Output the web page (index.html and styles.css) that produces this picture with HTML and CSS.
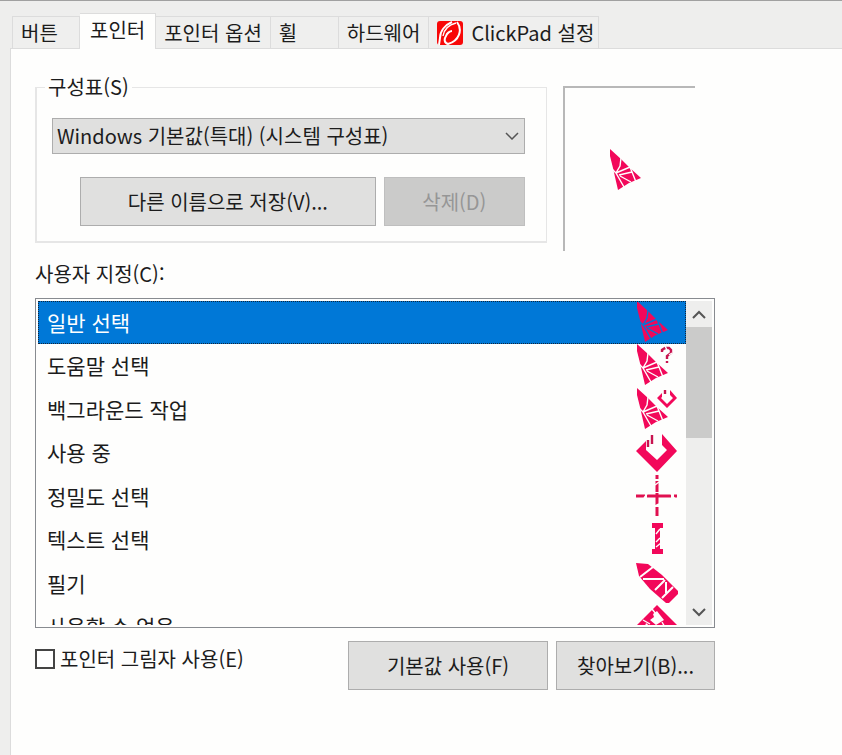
FILE: index.html
```html
<!DOCTYPE html>
<html lang="ko">
<head>
  <meta charset="UTF-8" />
  <meta name="viewport" content="width=device-width, initial-scale=1" />
  <title>마우스 속성</title>
  <link rel="stylesheet" href="styles.css">
</head>
<body>

<!-- shared cursor arrow -->
<svg class="defs" aria-hidden="true">
  <symbol id="arrow" viewBox="0 0 42 42">
    <path class="ink" d="M1 0L12 10L21 19L32 29L20 34L9 41L6 28L4 19L1 7Z"/>
    <path class="crack" d="M12 9L11 17L7 24L15 38M7 24L21 18L27 33M10 26L23 23M11 27L22 33M3 20L8 25"/>
  </symbol>
</svg>

<nav class="tabs" role="tablist">
  <button class="tab" role="tab">버튼</button>
  <button class="tab active" role="tab" aria-selected="true">포인터</button>
  <button class="tab" role="tab">포인터 옵션</button>
  <button class="tab" role="tab">휠</button>
  <button class="tab" role="tab">하드웨어</button>
  <button class="tab with-logo" role="tab">
    <svg class="logo" viewBox="0 0 26 24" aria-hidden="true">
      <rect width="26" height="24" rx="3" fill="#f80808"/>
      <path d="M15 1C8 4 3 10 3 17L2 24M20 1C26 9 22 20 11 23C7 22 7 18 9 15C10 12 13 10 15 10" fill="none" stroke="#fff" stroke-width="2"/>
      <path d="M19 2C11 4 7 9 6 15" fill="none" stroke="#fff" stroke-width="1.4"/>
    </svg>
    ClickPad 설정
  </button>
</nav>

<main class="panel">
  <div class="content">
    <div class="top">
      <fieldset class="scheme">
        <legend>구성표(S)</legend>
        <div class="select-wrap">
          <select aria-label="구성표(S)">
            <option>Windows 기본값(특대) (시스템 구성표)</option>
          </select>
          <svg class="chevron" viewBox="0 0 14 8" aria-hidden="true"><path d="M1 1L7 7L13 1"/></svg>
        </div>
        <div class="scheme-buttons">
          <button class="btn save">다른 이름으로 저장(V)...</button>
          <button class="btn delete" disabled>삭제(D)</button>
        </div>
      </fieldset>
      <div class="preview">
        <svg class="cursor"><use href="#arrow"/></svg>
      </div>
    </div>

    <p class="list-label" id="customLabel">사용자 지정(C):</p>
    <div class="listbox">
      <ul class="items" role="listbox" aria-labelledby="customLabel">
        <li class="selected" role="option" aria-selected="true">일반 선택
          <svg class="cursor"><use href="#arrow"/></svg>
        </li>
        <li role="option">도움말 선택
          <svg class="cursor" viewBox="0 0 42 42">
            <use href="#arrow" width="42" height="42"/>
            <path class="thin" d="M26 8V6L29 4H33L35 6V9L31 12V15M31 17V19"/>
            <path class="crack" d="M29 2L31 6M33 11L36 9"/>
          </svg>
        </li>
        <li role="option">백그라운드 작업
          <svg class="cursor" viewBox="0 0 42 42">
            <use href="#arrow" width="42" height="42"/>
            <path class="ink" d="M21 10L26 5V9L25 10L31 16L37 10L34 7V2L41 10L31 20Z"/>
            <path class="thin" d="M29 2V6"/>
          </svg>
        </li>
        <li role="option">사용 중
          <svg class="cursor" viewBox="0 0 42 42">
            <path class="ink" d="M0 20L10 10V19L21 29L31 19L26 14V3L41 20L21 41Z"/>
            <path class="thin" d="M12 9V16M16 4V13"/>
          </svg>
        </li>
        <li role="option">정밀도 선택
          <svg class="cursor" viewBox="0 0 42 42">
            <path class="line" d="M21 0V4M21 6V17M21 18V30M21 32V41M0 21H9M11 21H35M38 21H41"/>
            <path class="crack" d="M8 23L11 19M19 10L23 7M35 19L39 24M19 31L23 29"/>
          </svg>
        </li>
        <li role="option">텍스트 선택
          <svg class="cursor" viewBox="0 0 42 42">
            <path class="ink" d="M16 5H27V10H24V31H27V36H16V31H19V10H16Z"/>
            <path class="crack" d="M24 11L20 16M24 20L20 24M20 29L25 25"/>
          </svg>
        </li>
        <li role="option">필기
          <svg class="cursor" viewBox="0 0 42 42">
            <path class="ink" d="M0 1L12 2L26 13L42 29V32L33 41H30L14 27L3 14Z"/>
            <path class="crack wide" d="M4 15L17 5M7 17H28M19 28L29 18M26 36L37 25M30 20V31"/>
          </svg>
        </li>
        <li role="option">사용할 수 없음
          <svg class="cursor" viewBox="0 0 42 42">
            <path class="ink" fill-rule="evenodd" d="M21 0L41 20L21 41L1 20ZM21 6L17 9L18 12L14 15L20 20L28 15L24 10ZM10 18L9 21L21 33L24 30Z"/>
            <path class="crack" d="M16 4L20 9M7 15L14 19M26 17L30 24"/>
          </svg>
        </li>
      </ul>
      <div class="scrollbar">
        <button class="arrow-btn" aria-label="위로"><svg viewBox="0 0 14 9"><path d="M1 8L7 2L13 8"/></svg></button>
        <div class="thumb"></div>
        <button class="arrow-btn down" aria-label="아래로"><svg viewBox="0 0 14 9"><path d="M1 1L7 7L13 1"/></svg></button>
      </div>
    </div>

    <div class="bottom">
      <label class="shadow-check"><input type="checkbox">포인터 그림자 사용(E)</label>
      <button class="btn default">기본값 사용(F)</button>
      <button class="btn browse">찾아보기(B)...</button>
    </div>
  </div>
</main>

</body>
</html>
```
FILE: styles.css
```css
* { box-sizing: border-box; }
body {
  margin: 0;
  min-height: 100vh;
  display: flex;
  flex-direction: column;
  border-top: 1px solid #a0a0a0;
  background: #eeeeed;
  color: #1c1c1c;
  font-family: "Noto Sans CJK KR", sans-serif;
  font-size: 20px;
  font-weight: 400;
  line-height: 28px;
}
button, select, input {
  font: inherit;
  color: inherit;
  margin: 0;
}
.defs {
  position: absolute;
  width: 0;
  height: 0;
}

/* tabs */
.tabs {
  display: flex;
  align-items: flex-end;
  padding: 12px 0 0 12px;
}
.tab {
  display: flex;
  align-items: center;
  gap: 8px;
  min-width: 68px;
  height: 32px;
  padding: 0 8px;
  border: 1px solid #dcdcdc;
  border-width: 1px 1px 0 0;
  background: #efefee;
  white-space: nowrap;
}
.tab:first-child {
  border-left-width: 1px;
}
.tab.active {
  height: 36px;
  margin-bottom: -1px;
  padding: 0 10px 4px;
  background: #fefefd;
  z-index: 1;
}
.tab.with-logo {
  padding-right: 4px;
}
.logo {
  width: 26px;
  height: 24px;
}

/* page */
.panel {
  flex: 1;
  margin-left: 10px;
  padding: 24px;
  border: 1px solid #dcdcdc;
  border-width: 1px 0 0 1px;
  background: #fefefd;
}
.content {
  max-width: 680px;
}
.top {
  display: grid;
  grid-template-columns: 1fr 132px;
  align-items: start;
  gap: 16px;
  padding-right: 20px;
}
.scheme {
  min-width: 0;
  margin: 0;
  padding: 17px 21px 15px 15px;
  border: 2px solid #e6e6e6;
  border-width: 1px 1px 2px 2px;
}
.scheme legend {
  margin-left: -7px;
  padding: 0 3px;
}
.select-wrap {
  position: relative;
}
select {
  width: 100%;
  height: 36px;
  padding: 0 32px 0 4px;
  border: 1px solid #adadad;
  border-radius: 0;
  background: #e0e0df;
  appearance: none;
}
.chevron {
  position: absolute;
  top: 14px;
  right: 6px;
  width: 14px;
  height: 8px;
}
.chevron path {
  fill: none;
  stroke: #555;
  stroke-width: 1.5;
}
.scheme-buttons {
  display: grid;
  grid-template-columns: 297fr 142fr;
  gap: 8px;
  margin: 23px 0 0 28px;
}
.btn {
  height: 49px;
  padding: 0 8px;
  border: 1px solid #adadad;
  background: #e0e0df;
  white-space: nowrap;
}
.btn:disabled {
  border-color: #bfbfbf;
  background: #cbcbca;
  color: #969696;
}
.preview {
  height: 165px;
  margin-top: 13px;
  padding: 61px 0 0 44px;
  border: 2px solid #b8b8b8;
  border-width: 2px 0 0 2px;
}
.cursor {
  flex: none;
  display: block;
  width: 42px;
  height: 42px;
  color: #fefefd;
}
.ink { fill: #f2085a; }
.crack, .thin, .line {
  fill: none;
  stroke: currentColor;
  stroke-width: 1.4;
}
.crack.wide { stroke-width: 2; }
.thin { stroke: #c81450; stroke-width: 2.4; }
.line { stroke: #e01050; stroke-width: 3; }

/* pointer list */
.list-label {
  margin: 9px 0 10px;
}
.listbox {
  display: flex;
  height: 330px;
  padding: 2px;
  border: 1px solid #888b90;
}
.items {
  flex: 1;
  display: grid;
  grid-auto-rows: 43px 44px;
  margin: 0;
  padding: 0;
  overflow: hidden;
  font-size: 21px;
  list-style: none;
}
.items li {
  display: flex;
  align-items: center;
  justify-content: space-between;
  padding: 0 8px 2px 9px;
}
.items .selected {
  background: #0078d7;
  outline: 1px dotted #10263c;
  outline-offset: -1px;
  color: #fff;
}
.items .selected .cursor {
  color: #0078d7;
}
.scrollbar {
  display: flex;
  flex-direction: column;
  width: 26px;
  background: #eeeeed;
}
.arrow-btn {
  display: grid;
  place-items: center;
  height: 26px;
  padding: 0;
  border: 0;
  background: none;
}
.arrow-btn svg {
  width: 14px;
  height: 9px;
}
.arrow-btn path {
  fill: none;
  stroke: #555;
  stroke-width: 2;
}
.thumb {
  height: 111px;
  background: #cbcbca;
}
.arrow-btn.down {
  margin-top: auto;
}

/* bottom row */
.bottom {
  display: flex;
  align-items: flex-start;
  gap: 8px;
  margin-top: 13px;
}
.shadow-check {
  flex: 1;
  display: flex;
  align-items: center;
  gap: 5px;
  padding-top: 4px;
}
.shadow-check input {
  width: 20px;
  height: 20px;
  border: 2px solid #444;
  background: #fff;
  appearance: none;
}
.shadow-check input:checked {
  background: #0078d7;
}
.default {
  width: 200px;
}
.browse {
  width: 159px;
}
```
